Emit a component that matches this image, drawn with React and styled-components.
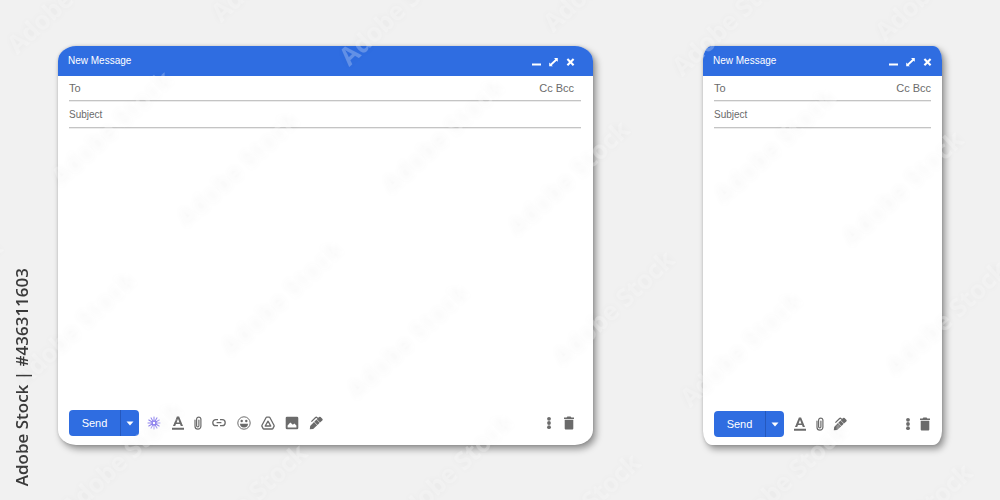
import React, { useId } from 'react';
import styled, { createGlobalStyle } from 'styled-components';

const GlobalStyle = createGlobalStyle`
  * {
    box-sizing: border-box;
  }
  body {
    margin: 0;
    background: #f1f1f1;
    font-family: "Liberation Sans", Arial, sans-serif;
    font-size: 11px;
    color: #6b6b6b;
  }
  button, input, textarea {
    font: inherit;
    color: inherit;
    border: 0;
    padding: 0;
    background: none;
    outline: none;
  }
  button {
    cursor: pointer;
  }
  svg {
    display: block;
  }
`;

const Page = styled.main`
  display: grid;
  grid-template-columns: 535fr 239fr;
  gap: 110px;
  min-height: 100vh;
  padding: 46px 58px 55px;
`;

const Window = styled.form`
  display: flex;
  flex-direction: column;
  min-width: 0;
  overflow: hidden;
  background: #fff;
  border-radius: ${props => (props.$compact ? '9px / 14px' : '18px / 15px')};
  box-shadow: 3px 4px 7px rgba(0, 0, 0, 0.4), 0 0 3px rgba(0, 0, 0, 0.15);
`;

const TitleBar = styled.header`
  display: flex;
  align-items: center;
  justify-content: space-between;
  height: 30px;
  padding: 0 ${props => (props.$compact ? '10px' : '18px')} 0 10px;
  background: #2f6de1;
  color: #fff;
`;

const Title = styled.h1`
  margin: 0;
  font-size: 10px;
  line-height: 12px;
  font-weight: 400;
`;

const WindowControls = styled.div`
  display: flex;
  gap: 8px;
  padding-top: 2px;
`;

const Fields = styled.div`
  padding: 0 ${props => (props.$compact ? '11px' : '12px')} 0 11px;
`;

const Field = styled.div`
  display: flex;
  align-items: center;
  height: ${props => props.$height};
  padding-right: ${props => (props.$compact ? '0' : '7px')};
  border-bottom: 1px solid #c4c4c4;
  box-shadow: 0 1px 0 #ececec;
`;

const FieldLabel = styled.label`
  font-size: ${props => (props.$small ? '10px' : '11px')};
`;

const FieldInput = styled.input`
  flex: 1;
  min-width: 0;
  margin-left: 6px;
`;

const CopyButtons = styled.div`
  display: flex;
  gap: 3px;
`;

const Message = styled.textarea`
  flex: 1;
  min-height: 120px;
  margin: 8px 11px;
  resize: none;
`;

const Footer = styled.footer`
  display: flex;
  align-items: center;
  padding: ${props => (props.$compact ? '0 8px 8px 11px' : '0 12px 9px 11px')};
`;

const SendGroup = styled.div`
  display: flex;
  height: 26px;
  margin-right: ${props => (props.$compact ? '4px' : '3px')};
  border-radius: 4px;
  overflow: hidden;
  background: #2f6de1;
  color: #fff;
`;

const SendButton = styled.button`
  width: 52px;
  border-right: 1px solid #2558bd;
`;

const CaretButton = styled.button`
  display: grid;
  place-items: center;
  width: 18px;
`;

const IconButton = styled.button`
  display: grid;
  place-items: center;
  width: ${props => props.$width || '24px'};
  height: 26px;
  color: ${props => props.$color || '#6b6b6b'};
`;

const Spacer = styled.div`
  flex: 1;
`;

const Overlay = styled.div`
  position: fixed;
  inset: 0;
  overflow: hidden;
  pointer-events: none;
`;

const Mark = styled.span`
  position: absolute;
  left: ${props => props.$x}px;
  top: ${props => props.$y}px;
  transform: translateY(-100%) rotate(-43deg);
  transform-origin: 0 100%;
  font: 700 25px/28px "Open Sans", "Noto Sans", sans-serif;
  white-space: nowrap;
  color: rgba(255, 255, 255, 0.25);
  text-shadow: 0 0 7px rgba(0, 0, 0, 0.04);
`;

const StockId = styled.p`
  position: absolute;
  left: 11px;
  bottom: 14px;
  margin: 0;
  writing-mode: vertical-rl;
  transform: rotate(180deg);
  font: 600 17px/22px "Open Sans", "Noto Sans", sans-serif;
  white-space: nowrap;
  color: #3a3a3a;
`;

const marks = [
  [20, 58], [224, 26], [352, 70], [556, 36], [685, 80], [888, 45],
  [64, 190], [190, 231], [395, 198], [521, 240], [727, 208], [855, 250],
  [-106, 358], [27, 391], [234, 360], [360, 403], [566, 370], [693, 411], [899, 380],
  [74, 521], [199, 563], [404, 533], [532, 573], [739, 541], [864, 583],
];

const MinimizeIcon = () => (
  <svg width="9" height="10" viewBox="0 0 9 10">
    <path d="M0 6.4h9v2H0z" fill="currentColor" />
  </svg>
);

const ExpandIcon = () => (
  <svg width="9" height="10" viewBox="0 0 9 10">
    <path d="M5 1H8.8V4.8L7.6 3.7 2.7 8.2 3.9 9.2H.2V5.6L1.5 6.8 6.3 2.3z" fill="currentColor" />
  </svg>
);

const CloseIcon = () => (
  <svg width="9" height="10" viewBox="0 0 9 10">
    <path d="M1.4 1.9l6.2 6.4M7.6 1.9L1.4 8.3" stroke="currentColor" strokeWidth="2.1" />
  </svg>
);

const CaretIcon = () => (
  <svg width="8" height="8" viewBox="0 0 8 8">
    <path d="M.5 2.6h7L4 6.6z" fill="currentColor" />
  </svg>
);

const BurstIcon = () => (
  <svg width="14" height="14" viewBox="0 0 14 14" fill="none" stroke="currentColor">
    {[0, 30, 60, 90, 120, 150, 180, 210, 240, 270, 300, 330].map(angle => (
      <path key={angle} d="M7 .6V5.4" transform={`rotate(${angle} 7 7)`} strokeWidth="1" />
    ))}
    <circle cx="7" cy="7" r="1.9" strokeWidth="1.2" />
  </svg>
);

const FormatIcon = () => (
  <svg width="14" height="14" viewBox="0 0 14 14">
    <path fillRule="evenodd" d="M5.9.4h2.2L12 10H9.8L9 8H5L4.2 10H2zM7 2.8L5.6 6.4h2.8z" fill="currentColor" />
    <path d="M1 11.8h12v1.9H1z" fill="currentColor" />
  </svg>
);

const ClipIcon = () => (
  <svg width="8" height="14" viewBox="0 0 8 14" fill="none" stroke="currentColor" strokeWidth="1.2" strokeLinecap="round">
    <path d="M1 4v6.2a2.9 2.9 0 0 0 5.9 0V2.9a2.2 2.2 0 0 0-4.3 0v6.8a1.1 1.1 0 0 0 2.3 0V4" />
  </svg>
);

const LinkIcon = () => (
  <svg width="14" height="14" viewBox="0 0 14 14" fill="none" stroke="currentColor" strokeWidth="1.3">
    <path d="M6 3.7H3.8a3 3 0 0 0 0 6H6M8 3.7h2.2a3 3 0 0 1 0 6H8M4.6 6.7h4.8" />
  </svg>
);

const SmileIcon = () => (
  <svg width="14" height="14" viewBox="0 0 14 14">
    <circle cx="7" cy="7" r="6.2" fill="none" stroke="currentColor" strokeWidth="1" />
    <circle cx="4.7" cy="5" r="1.2" fill="currentColor" />
    <circle cx="9.3" cy="5" r="1.2" fill="currentColor" />
    <path d="M3 7.8h8a4 3.7 0 0 1-8 0z" fill="currentColor" />
  </svg>
);

const DriveIcon = () => (
  <svg width="14" height="14" viewBox="0 0 14 14" fill="none" stroke="currentColor" strokeWidth="1.3" strokeLinejoin="round">
    <path d="M5.9 1.1h2.2q.6 0 .9.6L13 9.3q.3.6 0 1.1l-1 2q-.3.6-.9.6H2.9q-.6 0-.9-.6l-1-2q-.3-.5 0-1.1L5 1.7q.3-.6.9-.6z" />
    <path d="M7 5.2L9.8 10H4.2z" />
  </svg>
);

const ImageIcon = () => (
  <svg width="14" height="14" viewBox="0 0 14 14">
    <path fillRule="evenodd" d="M2 .8h10a1.3 1.3 0 0 1 1.3 1.3v9.8A1.3 1.3 0 0 1 12 13.2H2A1.3 1.3 0 0 1 .7 11.9V2.1A1.3 1.3 0 0 1 2 .8zM2.6 11.4h8.8V9.6L9.3 7.5 7.9 8.8 5.3 6.6 2.6 9.6z" fill="currentColor" />
  </svg>
);

const PenIcon = () => (
  <svg width="14" height="14" viewBox="0 0 14 14" fill="currentColor">
    <path d="M.8 13.3L1.2 10 5 6.1 8.2 9.2 4.2 13z" />
    <path d="M5.3 5.8L7.5 3.6 10.7 6.7 8.5 8.9z" />
    <path d="M7.8 3.3L10 1.1a1.1 1.1 0 0 1 1.6 0l1.7 1.7a1.1 1.1 0 0 1 0 1.6L11 6.4z" />
    <path d="M2.4 5.6L6.6 1.5q.7-.6 1.4.1l.9.9" fill="none" stroke="currentColor" strokeWidth="1.3" />
  </svg>
);

const MoreIcon = () => (
  <svg width="6" height="14" viewBox="0 0 6 14" fill="currentColor">
    <circle cx="3" cy="2.8" r="1.9" />
    <circle cx="3" cy="7" r="1.9" />
    <circle cx="3" cy="11.2" r="1.9" />
  </svg>
);

const TrashIcon = () => (
  <svg width="12" height="14" viewBox="0 0 12 14" fill="currentColor">
    <path d="M1 1.4h2.6L4.4.6h3.2l.8.8H11v1.7H1z" />
    <path d="M1.7 3.8h8.6v8.8a.9.9 0 0 1-.9.9H2.6a.9.9 0 0 1-.9-.9z" />
  </svg>
);

const ComposeWindow = ({ compact }) => {
  const id = useId();
  return (
    <Window $compact={compact} onSubmit={e => e.preventDefault()}>
      <TitleBar $compact={compact}>
        <Title>New Message</Title>
        <WindowControls>
          <button type="button" aria-label="Minimize"><MinimizeIcon /></button>
          <button type="button" aria-label="Full screen"><ExpandIcon /></button>
          <button type="button" aria-label="Close"><CloseIcon /></button>
        </WindowControls>
      </TitleBar>
      <Fields $compact={compact}>
        <Field $height="25px" $compact={compact}>
          <FieldLabel htmlFor={`${id}-to`}>To</FieldLabel>
          <FieldInput id={`${id}-to`} type="email" />
          <CopyButtons>
            <button type="button">Cc</button>
            <button type="button">Bcc</button>
          </CopyButtons>
        </Field>
        <Field $height="27px" $compact={compact}>
          <FieldLabel $small htmlFor={`${id}-subject`}>Subject</FieldLabel>
          <FieldInput id={`${id}-subject`} type="text" />
        </Field>
      </Fields>
      <Message aria-label="Message body" />
      <Footer $compact={compact}>
        <SendGroup $compact={compact}>
          <SendButton type="submit">Send</SendButton>
          <CaretButton type="button" aria-label="More send options"><CaretIcon /></CaretButton>
        </SendGroup>
        {!compact && <IconButton type="button" aria-label="Assistant" $color="#8f83ee"><BurstIcon /></IconButton>}
        <IconButton type="button" aria-label="Formatting options"><FormatIcon /></IconButton>
        <IconButton type="button" aria-label="Attach files" $width="16px"><ClipIcon /></IconButton>
        {!compact && (
          <>
            <IconButton type="button" aria-label="Insert link" $width="26px"><LinkIcon /></IconButton>
            <IconButton type="button" aria-label="Insert emoji"><SmileIcon /></IconButton>
            <IconButton type="button" aria-label="Insert from drive"><DriveIcon /></IconButton>
            <IconButton type="button" aria-label="Insert photo"><ImageIcon /></IconButton>
          </>
        )}
        <IconButton type="button" aria-label="Insert signature"><PenIcon /></IconButton>
        <Spacer />
        <IconButton type="button" aria-label="More options" $width="16px"><MoreIcon /></IconButton>
        <IconButton type="button" aria-label="Discard draft" $width={compact ? '18px' : '24px'}><TrashIcon /></IconButton>
      </Footer>
    </Window>
  );
};

const App = () => (
  <>
    <GlobalStyle />
    <Page>
      <ComposeWindow />
      <ComposeWindow compact />
    </Page>
    <Overlay>
      {marks.map(([x, y]) => (
        <Mark key={`${x},${y}`} $x={x} $y={y} aria-hidden="true">Adobe Stock</Mark>
      ))}
      <StockId>Adobe Stock | #436311603</StockId>
    </Overlay>
  </>
);

export default App;
